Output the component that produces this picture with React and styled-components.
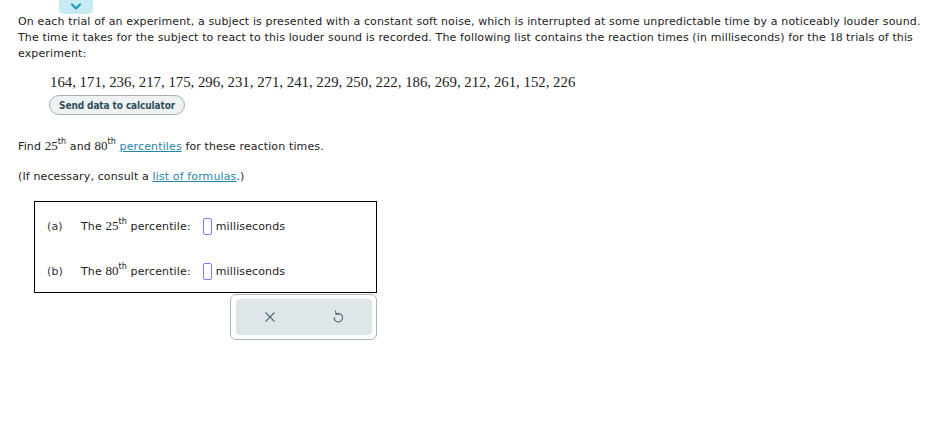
import React from "react";
import styled, { createGlobalStyle } from "styled-components";

const Global = createGlobalStyle`
  html, body { margin: 0; padding: 0; background: #fff; }
  body { font-family: "DejaVu Sans", Verdana, sans-serif; font-size: 11px; letter-spacing: 0.13px; color: #222; }
`;

const Page = styled.div`
  position: relative;
  width: 930px;
  height: 434px;
  padding: 14px 0 0 18px;
  box-sizing: border-box;
`;

const Tab = styled.div`
  position: absolute;
  left: 59px;
  top: 0;
  width: 34px;
  height: 14px;
  background: #c8ebf3;
  border-radius: 0 0 5px 5px;
  display: flex;
  align-items: center;
  justify-content: center;
`;

const Para = styled.p`
  margin: 0;
  width: 910px;
  line-height: 16px;
`;

const Math = styled.span`
  font-family: "Liberation Serif", "Times New Roman", serif;
  font-size: 13px;
  line-height: 0;
  letter-spacing: 0;
`;

const DataBlock = styled.div`
  margin: 12px 0 0 32px;
  display: flex;
  flex-direction: column;
  align-items: flex-start;
  gap: 4px;
`;

const DataLine = styled.div`
  font-family: "Liberation Serif", "Times New Roman", serif;
  font-size: 14.8px;
  line-height: 17px;
  letter-spacing: 0;
  color: #222;
`;

const PillButton = styled.button`
  margin-left: -1px;
  height: 20px;
  padding: 0 9px;
  border: 1px solid #9fb1b7;
  border-radius: 10px;
  background: #eef2f3;
  color: #2e4f5b;
  font-family: "DejaVu Sans Condensed", "DejaVu Sans", Verdana, sans-serif;
  font-stretch: condensed;
  font-size: 10px;
  font-weight: bold;
  letter-spacing: -0.1px;
  cursor: pointer;
`;

const Line = styled.p`
  margin: ${(p) => p.$mt}px 0 0 0;
  line-height: 16px;
`;

const Sup = styled.sup`
  font-size: 8px;
  vertical-align: 6px;
  line-height: 0;
`;

const Link = styled.a`
  color: #1f86ad;
  text-decoration: underline;
`;

const AnswerArea = styled.div`
  margin: 16px 0 0 16px;
  display: flex;
  flex-direction: column;
  align-items: flex-end;
  width: 343px;
`;

const Box = styled.div`
  width: 343px;
  height: 92px;
  box-sizing: border-box;
  border: 1px solid #000;
  padding: 16px 0 0 12px;
  display: flex;
  flex-direction: column;
  gap: 29px;
`;

const Row = styled.div`
  display: flex;
  align-items: center;
  height: 16px;
`;

const Label = styled.span`
  width: 34px;
  color: #333;
`;

const Prompt = styled.span`
  white-space: nowrap;
`;

const Input = styled.span`
  display: inline-block;
  width: 7px;
  height: 15px;
  border: 1px solid #7b7bf5;
  border-radius: 2px;
  margin: 0 4px 0 12px;
`;

const Panel = styled.div`
  width: 147px;
  height: 46px;
  box-sizing: border-box;
  border: 1px solid #a9b8bf;
  border-radius: 6px;
  padding: 4px 4px 4px 5px;
  margin-top: 1px;
`;

const PanelInner = styled.div`
  height: 100%;
  background: #dfe6e9;
  border-radius: 4px;
  display: flex;
  align-items: center;
  justify-content: space-around;
`;

const IconBtn = styled.div`
  width: 20px;
  height: 20px;
  display: flex;
  align-items: center;
  justify-content: center;
`;

export default function App() {
  return (
    <>
      <Global />
      <Page>
        <Tab>
          <svg width="12" height="8" viewBox="0 0 12 8">
            <path d="M2 1.5 L6 5.5 L10 1.5" fill="none" stroke="#1d9cb8" strokeWidth="2.2" strokeLinecap="round" strokeLinejoin="round" />
          </svg>
        </Tab>
        <Para>
          On each trial of an experiment, a subject is presented with a constant soft noise, which is interrupted at some unpredictable time by a noticeably louder sound. The time it takes for the subject to react to this louder sound is recorded. The following list contains the reaction times (in milliseconds) for the <Math>18</Math> trials of this experiment:
        </Para>
        <DataBlock>
          <DataLine>164, 171, 236, 217, 175, 296, 231, 271, 241, 229, 250, 222, 186, 269, 212, 261, 152, 226</DataLine>
          <PillButton>Send data to calculator</PillButton>
        </DataBlock>
        <Line $mt={24}>
          Find <Math>25</Math><Sup>th</Sup> and <Math>80</Math><Sup>th</Sup> <Link>percentiles</Link> for these reaction times.
        </Line>
        <Line $mt={14}>
          (If necessary, consult a <Link>list of formulas</Link>.)
        </Line>
        <AnswerArea>
          <Box>
            <Row>
              <Label>(a)</Label>
              <Prompt>
                The <Math>25</Math><Sup>th</Sup> percentile:
              </Prompt>
              <Input />
              <span>milliseconds</span>
            </Row>
            <Row>
              <Label>(b)</Label>
              <Prompt>
                The <Math>80</Math><Sup>th</Sup> percentile:
              </Prompt>
              <Input />
              <span>milliseconds</span>
            </Row>
          </Box>
          <Panel>
            <PanelInner>
              <IconBtn>
                <svg width="12" height="12" viewBox="0 0 12 12">
                  <path d="M1.5 1.5 L10.5 10.5 M10.5 1.5 L1.5 10.5" stroke="#55707c" strokeWidth="1.2" />
                </svg>
              </IconBtn>
              <IconBtn>
                <svg width="12" height="14" viewBox="0 0 12 14">
                  <path d="M4 4.3 A4.2 4.2 0 1 1 2.2 7.5" fill="none" stroke="#55707c" strokeWidth="1.2" strokeLinecap="round" />
                  <path d="M3.5 1 L4.2 4.4 L7.5 3.6" fill="none" stroke="#55707c" strokeWidth="1.2" strokeLinecap="round" strokeLinejoin="round" />
                </svg>
              </IconBtn>
            </PanelInner>
          </Panel>
        </AnswerArea>
      </Page>
    </>
  );
}
